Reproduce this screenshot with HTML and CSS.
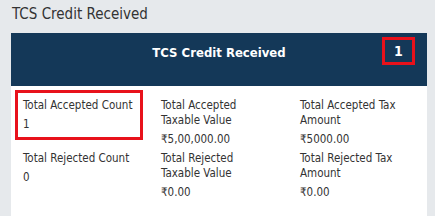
FILE: index.html
```html
<!DOCTYPE html>
<html lang="en">
<head>
    <meta charset="UTF-8">
    <meta name="viewport" content="width=device-width, initial-scale=1.0">
    <title>TCS Credit Received</title>
    <link rel="stylesheet" href="styles.css">
</head>
<body>
    <h3 class="page-title">TCS Credit Received</h3>

    <div class="panel">
        <div class="panel-head">
            <h4>TCS Credit Received</h4>
            <span class="count-badge">1</span>
        </div>
        <div class="panel-body">
            <div class="cell mark">
                <p class="label">Total Accepted Count</p>
                <p class="value">1</p>
            </div>
            <div class="cell">
                <p class="label">Total Accepted<br>Taxable Value</p>
                <p class="value">&#8377;5,00,000.00</p>
            </div>
            <div class="cell">
                <p class="label">Total Accepted Tax<br>Amount</p>
                <p class="value">&#8377;5000.00</p>
            </div>
            <div class="cell">
                <p class="label">Total Rejected Count</p>
                <p class="value">0</p>
            </div>
            <div class="cell">
                <p class="label">Total Rejected<br>Taxable Value</p>
                <p class="value">&#8377;0.00</p>
            </div>
            <div class="cell">
                <p class="label">Total Rejected Tax<br>Amount</p>
                <p class="value">&#8377;0.00</p>
            </div>
        </div>
    </div>
</body>
</html>
```

FILE: styles.css
```css
body {
    background-color: #e6e9ec;
    font-family: "DejaVu Sans Condensed", "DejaVu Sans", sans-serif;
    color: #333;
    margin: 0;
    padding: 0 8px 0 11px;
}
.page-title {
    font-size: 15px;
    font-weight: normal;
    line-height: 18px;
    margin: 5px 0 10px 1px;
}
.panel {
    width: 416px;
}
.panel-head {
    background-color: #143858;
    color: #fff;
    position: relative;
    padding: 12px 10px 25px;
    text-align: center;
}
.panel-head h4 {
    font-size: 13px;
    line-height: 16px;
    margin: 0;
}
.count-badge {
    position: absolute;
    top: 4px;
    right: 12px;
    width: 27px;
    height: 22px;
    border: 3px solid #e8111b;
    font-weight: bold;
    font-size: 14px;
    line-height: 22px;
    text-align: center;
}
.panel-body {
    background-color: #fff;
    display: grid;
    grid-template-columns: 138px 139px 1fr;
    row-gap: 4px;
    padding: 12px 0 26px 12px;
}
.cell {
    font-size: 11.5px;
    line-height: 15px;
    white-space: nowrap;
}
.cell p {
    margin: 0;
}
.cell .value {
    margin-top: 4px;
}
.mark {
    align-self: start;
    width: 112px;
    outline: 3px solid #e8111b;
    outline-offset: 5px;
}
```
